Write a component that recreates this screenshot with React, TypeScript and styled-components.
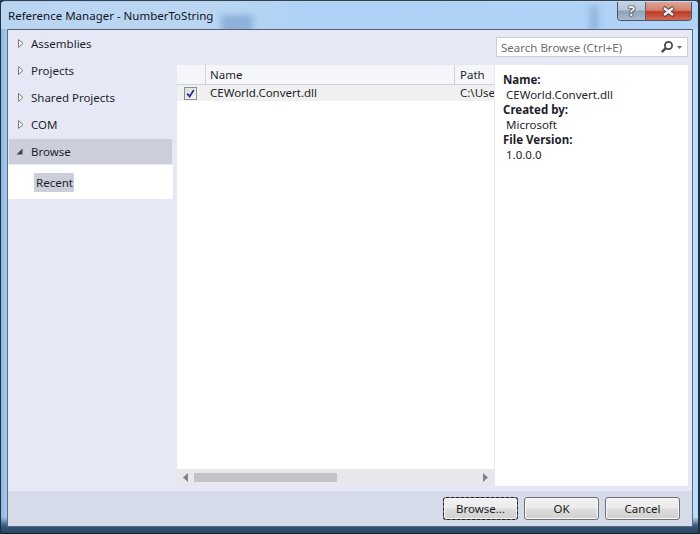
import React from "react";
import styled, { createGlobalStyle } from "styled-components";

const categories = ["Assemblies", "Projects", "Shared Projects", "COM"];

const GlobalStyle = createGlobalStyle`
  html, body {
    margin: 0;
    padding: 0;
    background: #2a3a4c;
  }
  body {
    font-family: "Noto Sans", "Open Sans", sans-serif;
    font-size: 11.5px;
    color: #1e1e2a;
  }
`;

const Arrow = ({ open }: { open?: boolean }) =>
  open ? (
    <svg width="7" height="7" viewBox="0 0 7 7">
      <path d="M6.5 0.5V6.5H0.5Z" fill="#444" />
    </svg>
  ) : (
    <svg width="6" height="9" viewBox="0 0 6 9">
      <path d="M0.5 0.5L5 4.5L0.5 8.5Z" fill="#f4f4f6" stroke="#7d7d7d" />
    </svg>
  );

const App = () => {
  return (
    <>
      <GlobalStyle />
      <Frame>
        <TitleBar>
          <Smudge />
          <BackWindowEdge />
          <Title>Reference Manager - NumberToString</Title>
          <Caption>
            <HelpButton>?</HelpButton>
            <CloseButton>
              <svg width="15" height="11" viewBox="0 0 15 11">
                <path d="M2.5 1.5L12.5 9.5M12.5 1.5L2.5 9.5" stroke="#3a3a44" strokeWidth="4" />
                <path d="M3 2L12 9M12 2L3 9" stroke="#f2f2f2" strokeWidth="2.4" />
              </svg>
            </CloseButton>
          </Caption>
        </TitleBar>
        <Client>
          <Body>
            <Nav>
              {categories.map((name) => (
                <NavItem key={name}>
                  <ArrowSlot>
                    <Arrow />
                  </ArrowSlot>
                  {name}
                </NavItem>
              ))}
              <NavItem selected>
                <ArrowSlot open>
                  <Arrow open />
                </ArrowSlot>
                Browse
              </NavItem>
              <SubPanel>
                <SubItem>Recent</SubItem>
              </SubPanel>
            </Nav>
            <Main>
              <SearchRow>
                <SearchBox>
                  <SearchHint>Search Browse (Ctrl+E)</SearchHint>
                  <svg width="14" height="14" viewBox="0 0 14 14">
                    <circle cx="8.5" cy="5.5" r="3.6" fill="none" stroke="#4a4a4a" strokeWidth="1.8" />
                    <path d="M5.8 8.2L1.8 12.2" stroke="#4a4a4a" strokeWidth="2.4" />
                  </svg>
                  <svg width="5" height="3" viewBox="0 0 5 3">
                    <path d="M0 0H5L2.5 3Z" fill="#666" />
                  </svg>
                </SearchBox>
              </SearchRow>
              <Panels>
                <Grid>
                  <GridHeader>
                    <CheckCol />
                    <NameCol>Name</NameCol>
                    <PathCol>Path</PathCol>
                  </GridHeader>
                  <GridRow>
                    <CheckCell>
                      <Check>
                        <svg width="9" height="9" viewBox="0 0 9 9">
                          <path d="M1.2 4.6L3.6 7.4L7.8 1" fill="none" stroke="#2c2f8c" strokeWidth="1.8" />
                        </svg>
                      </Check>
                    </CheckCell>
                    <NameCell>CEWorld.Convert.dll</NameCell>
                    <PathCell>C:\Use</PathCell>
                  </GridRow>
                  <GridFill />
                  <ScrollBar>
                    <ScrollArrow>
                      <svg width="5" height="9" viewBox="0 0 5 9">
                        <path d="M5 0V9L0 4.5Z" fill="#7d8190" />
                      </svg>
                    </ScrollArrow>
                    <ScrollTrack>
                      <ScrollThumb />
                    </ScrollTrack>
                    <ScrollArrow>
                      <svg width="5" height="9" viewBox="0 0 5 9">
                        <path d="M0 0V9L5 4.5Z" fill="#7d8190" />
                      </svg>
                    </ScrollArrow>
                  </ScrollBar>
                </Grid>
                <Details>
                  <DetailLabel>Name:</DetailLabel>
                  <DetailValue>CEWorld.Convert.dll</DetailValue>
                  <DetailLabel>Created by:</DetailLabel>
                  <DetailValue>Microsoft</DetailValue>
                  <DetailLabel>File Version:</DetailLabel>
                  <DetailValue>1.0.0.0</DetailValue>
                </Details>
              </Panels>
            </Main>
          </Body>
          <Footer>
            <DialogButton focused>Browse...</DialogButton>
            <DialogButton>OK</DialogButton>
            <DialogButton>Cancel</DialogButton>
          </Footer>
        </Client>
      </Frame>
    </>
  );
};

export default App;

const Frame = styled.div`
  width: 700px;
  height: 534px;
  box-sizing: border-box;
  display: flex;
  flex-direction: column;
  padding: 1px 6px 7px 7px;
  background:
    linear-gradient(0deg, #2b4565 0, #34567c 7px, transparent 16px),
    linear-gradient(90deg, #8fb8e4 0, #a9cdf2 7px, #bcdcff 100%);
  border-top: 1px solid #3a4048;
  border-left: 1px solid #20303c;
  border-right: 2px solid #26303a;
  border-bottom: 1px solid #16202c;
  border-radius: 5px 5px 3px 3px;
  position: relative;
  overflow: hidden;
`;
const TitleBar = styled.div`
  height: 27px;
  flex: none;
  display: flex;
  align-items: flex-start;
  position: relative;
  overflow: hidden;
  margin: 0 -6px 0 -7px;
  padding: 0 6px 0 7px;
  background: linear-gradient(90deg, #b9d5f2 0, #bad6f3 220px, #afd2f6 300px, #afd2f6 100%);
`;
const Smudge = styled.div`
  position: absolute;
  left: 220px;
  top: 13px;
  width: 32px;
  height: 18px;
  background: #8db1da;
  filter: blur(3px);
`;
const BackWindowEdge = styled.div`
  position: absolute;
  left: 589px;
  top: 4px;
  width: 8px;
  height: 26px;
  background: #8fb3d8;
  filter: blur(3px);
`;
const Title = styled.div`
  position: relative;
  margin-top: 6px;
  line-height: 16px;
  color: #10141c;
`;
const Caption = styled.div`
  display: flex;
  margin-left: auto;
  height: 18px;
  border: 1px solid #4a5564;
  border-top: none;
  border-radius: 0 0 4px 4px;
  overflow: hidden;
  position: relative;
`;
const HelpButton = styled.div`
  width: 27px;
  text-align: center;
  font-size: 14px;
  font-weight: 700;
  line-height: 18px;
  color: #f2f4f6;
  text-shadow: 0 0 1px #222, 0 0 1px #222, 0 0 2px #333;
  border-right: 1px solid #5a6470;
  background: linear-gradient(#c5d3e2 0, #b6c6d8 45%, #8ea2b6 50%, #a8bccf 100%);
`;
const CloseButton = styled.div`
  width: 45px;
  display: flex;
  align-items: center;
  justify-content: center;
  background: linear-gradient(#dfa495 0, #d4806c 45%, #c03a25 55%, #cf6a52 100%);
`;
const Client = styled.div`
  flex: 1;
  min-height: 0;
  display: flex;
  flex-direction: column;
  background: #e6e9f5;
  border-top: 1px solid #56606e;
  outline: 1px solid #5e6a78;
`;
const Body = styled.div`
  flex: 1;
  min-height: 0;
  display: flex;
`;
const Nav = styled.nav`
  width: 169px;
  flex: none;
  padding-top: 1px;
  display: flex;
  flex-direction: column;
`;
const NavItem = styled.div<{ selected?: boolean }>`
  height: 25px;
  flex: none;
  margin: 0 0 2px 1px;
  width: 163px;
  display: flex;
  align-items: center;
  background: ${(props) => (props.selected ? "#cccedb" : "transparent")};
`;
const ArrowSlot = styled.span<{ open?: boolean }>`
  width: 22px;
  padding-left: ${(props) => (props.open ? "7px" : "9px")};
  box-sizing: border-box;
  display: flex;
  align-items: center;
`;
const SubPanel = styled.div`
  background: #fff;
  height: 34px;
  width: 165px;
  flex: none;
  margin-top: -1px;
  padding: 8px 0 0 26px;
  box-sizing: border-box;
`;
const SubItem = styled.span`
  display: inline-block;
  height: 19px;
  line-height: 19px;
  padding: 0 1px 0 2px;
  background: #cccedb;
`;
const Main = styled.div`
  flex: 1;
  min-width: 0;
  display: flex;
  flex-direction: column;
`;
const SearchRow = styled.div`
  height: 35px;
  flex: none;
  display: flex;
  justify-content: flex-end;
  align-items: flex-start;
  padding: 7px 4px 0 0;
  box-sizing: border-box;
`;
const SearchBox = styled.div`
  width: 192px;
  height: 20px;
  box-sizing: border-box;
  background: #fff;
  border: 1px solid #cccedb;
  display: flex;
  align-items: center;
  padding: 0 5px 0 4px;
  gap: 3px;
`;
const SearchHint = styled.span`
  flex: 1;
  color: #6d6d6d;
`;
const Panels = styled.div`
  flex: 1;
  min-height: 0;
  display: flex;
  padding-bottom: 5px;
  padding-right: 4px;
`;
const Grid = styled.div`
  width: 317px;
  flex: none;
  display: flex;
  flex-direction: column;
  background: #fff;
  overflow: hidden;
`;
const GridHeader = styled.div`
  height: 20px;
  flex: none;
  display: flex;
  background: #f5f6fa;
  border-bottom: 1px solid #cfd2de;
  box-sizing: border-box;
  line-height: 19px;
`;
const CheckCol = styled.div`
  width: 29px;
  flex: none;
  box-sizing: border-box;
  border-right: 1px solid #cfd2de;
`;
const NameCol = styled.div`
  width: 249px;
  flex: none;
  box-sizing: border-box;
  padding-left: 4px;
  border-right: 1px solid #cfd2de;
`;
const PathCol = styled.div`
  padding-left: 5px;
  white-space: nowrap;
`;
const GridRow = styled.div`
  height: 16px;
  flex: none;
  display: flex;
  background: #f0f0f0;
  line-height: 15px;
  white-space: nowrap;
`;
const CheckCell = styled.div`
  width: 29px;
  flex: none;
  display: flex;
  justify-content: center;
  align-items: center;
  padding-right: 3px;
  box-sizing: border-box;
`;
const Check = styled.span`
  width: 13px;
  height: 13px;
  box-sizing: border-box;
  display: flex;
  align-items: center;
  justify-content: center;
  border: 1px solid #8e8f8f;
  background: linear-gradient(135deg, #dcdde0, #f6f6f8);
`;
const NameCell = styled.div`
  width: 249px;
  flex: none;
  padding-left: 4px;
  box-sizing: border-box;
`;
const PathCell = styled.div`
  padding-left: 5px;
`;
const GridFill = styled.div`
  flex: 1;
  background: #fff;
`;
const ScrollBar = styled.div`
  height: 17px;
  flex: none;
  display: flex;
  align-items: center;
  background: #e8e8ec;
`;
const ScrollArrow = styled.span`
  width: 17px;
  flex: none;
  display: flex;
  justify-content: center;
`;
const ScrollTrack = styled.div`
  flex: 1;
  height: 9px;
`;
const ScrollThumb = styled.div`
  width: 143px;
  height: 9px;
  background: #c2c3c9;
`;
const Details = styled.aside`
  flex: 1;
  margin-left: 1px;
  background: #fff;
  padding: 7px 0 0 8px;
  line-height: 15px;
`;
const DetailLabel = styled.div`
  font-weight: 700;
`;
const DetailValue = styled.div`
  padding-left: 3px;
`;
const Footer = styled.footer`
  height: 35px;
  flex: none;
  display: flex;
  justify-content: flex-end;
  align-items: flex-start;
  gap: 6px;
  padding: 6px 12px 0 0;
  box-sizing: border-box;
  background: #d6dbe9;
`;
const DialogButton = styled.button<{ focused?: boolean }>`
  width: 75px;
  height: 23px;
  box-sizing: border-box;
  padding: 0;
  font: inherit;
  color: #1a1a1a;
  border: 1px solid #707070;
  border-radius: 3px;
  background: linear-gradient(#f3f3f3 0, #ebebeb 48%, #dddddd 52%, #cfcfcf 100%);
  box-shadow: inset 0 0 0 1px #f8f8f8;
  outline: ${(props) => (props.focused ? "1px dashed #222" : "none")};
  outline-offset: ${(props) => (props.focused ? "-1px" : "0")};
`;
